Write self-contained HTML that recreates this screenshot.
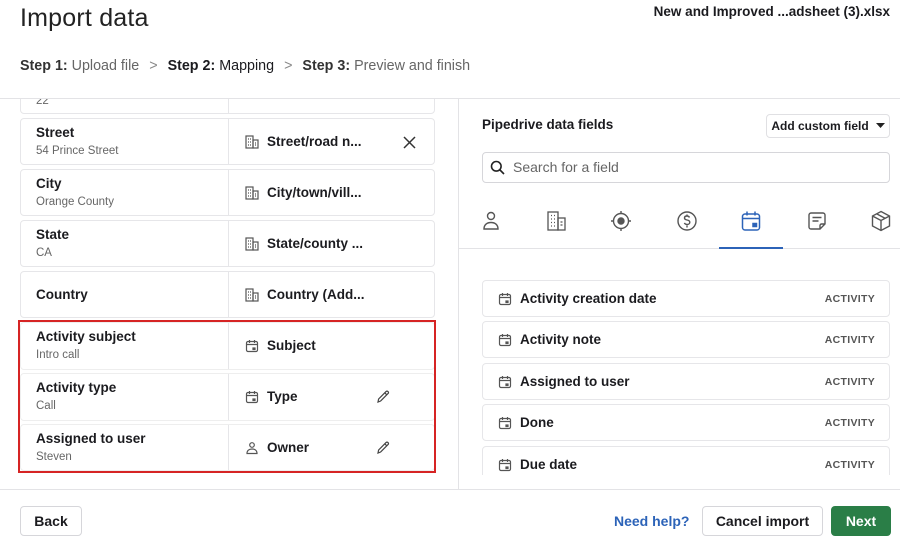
<!DOCTYPE html>
<html><head><meta charset="utf-8">
<style>
*{box-sizing:border-box;margin:0;padding:0}
body{width:900px;height:545px;overflow:hidden;background:#fff;font-family:"Liberation Sans",sans-serif;color:#1b1b1f;position:relative}
.abs{position:absolute}
h1{position:absolute;left:20px;top:4px;font-size:25px;font-weight:400;color:#222;letter-spacing:0.2px}
.file{position:absolute;right:10px;top:4px;font-size:13.5px;font-weight:700}
.steps{position:absolute;left:20px;top:58px;font-size:14.3px;color:#666}
.steps b{color:#333}
.steps .sep{color:#888;margin:0 10px}
.hline{position:absolute;left:0;width:900px;height:1px;background:#e3e3e6}
.vline{position:absolute;left:458px;top:99px;width:1px;height:391px;background:#e3e3e6}
.row{position:absolute;left:20px;width:415px;border:1px solid #e6e6e9;border-radius:4px;background:#fff}
.row .l{position:absolute;left:0;top:0;bottom:0;width:208px;border-right:1px solid #e6e6e9}
.row .t{position:absolute;left:15px;font-size:13.5px;font-weight:700}
.row .s{position:absolute;left:15px;font-size:11.5px;color:#666}
.row .r{position:absolute;left:224px;font-size:13.5px;font-weight:700;display:flex;align-items:center}
.row .r svg{margin-right:8px}
.red{position:absolute;left:18px;top:320px;width:418px;height:153px;border:2px solid #d62424}
.btn{position:absolute;border:1px solid #d6d6da;border-radius:4px;font-size:14px;font-weight:700;display:flex;align-items:center;justify-content:center;background:#fff}
.card{position:absolute;left:482px;width:408px;height:37px;border:1px solid #e6e6e9;border-radius:4px;display:flex;align-items:center;padding-left:15px;font-size:13.5px;font-weight:700}
.card svg{margin-right:8px}
.card .tag{position:absolute;right:14px;font-size:10.5px;color:#555;letter-spacing:0.3px}
.ico{position:absolute;top:210px}
</style></head><body>
<div class="row" style="top:84px;height:30px"><div class="l"></div><div class="s" style="top:10px">22</div></div>
<div class="abs" style="left:0;top:0;width:900px;height:99px;background:#fff"></div>
<h1>Import data</h1>
<div class="file">New and Improved ...adsheet (3).xlsx</div>
<div class="steps"><b>Step 1:</b> Upload file<span class="sep">&gt;</span><b style="color:#1b1b1f">Step 2:</b> <span style="color:#1b1b1f">Mapping</span><span class="sep">&gt;</span><b>Step 3:</b> Preview and finish</div>
<div class="hline" style="top:98px"></div>
<div class="vline"></div>

<div class="row" style="top:118px;height:47px"><div class="l"></div><div class="t" style="top:6px">Street</div><div class="s" style="top:26px">54 Prince Street</div>
<div class="r" style="top:15px"><svg width="14" height="14" viewBox="0 0 14 14" fill="none" stroke="#555" stroke-width="1.2"><rect x="1" y="1" width="7" height="12"/><rect x="8" y="5" width="5" height="8"/><path d="M3 4h1M5 4h1M3 7h1M5 7h1M3 10h1M5 10h1M10 8h1M10 10h1"/></svg>Street/road n...</div>
<svg class="abs" style="left:382px;top:17px" width="13" height="13" viewBox="0 0 13 13" stroke="#333" stroke-width="1.5"><path d="M1 1L12 12M12 1L1 12"/></svg></div>

<div class="row" style="top:169px;height:47px"><div class="l"></div><div class="t" style="top:6px">City</div><div class="s" style="top:26px">Orange County</div>
<div class="r" style="top:15px"><svg width="14" height="14" viewBox="0 0 14 14" fill="none" stroke="#555" stroke-width="1.2"><rect x="1" y="1" width="7" height="12"/><rect x="8" y="5" width="5" height="8"/><path d="M3 4h1M5 4h1M3 7h1M5 7h1M3 10h1M5 10h1M10 8h1M10 10h1"/></svg>City/town/vill...</div></div>

<div class="row" style="top:220px;height:47px"><div class="l"></div><div class="t" style="top:6px">State</div><div class="s" style="top:26px">CA</div>
<div class="r" style="top:15px"><svg width="14" height="14" viewBox="0 0 14 14" fill="none" stroke="#555" stroke-width="1.2"><rect x="1" y="1" width="7" height="12"/><rect x="8" y="5" width="5" height="8"/><path d="M3 4h1M5 4h1M3 7h1M5 7h1M3 10h1M5 10h1M10 8h1M10 10h1"/></svg>State/county ...</div></div>

<div class="row" style="top:271px;height:47px"><div class="l"></div><div class="t" style="top:15px">Country</div>
<div class="r" style="top:15px"><svg width="14" height="14" viewBox="0 0 14 14" fill="none" stroke="#555" stroke-width="1.2"><rect x="1" y="1" width="7" height="12"/><rect x="8" y="5" width="5" height="8"/><path d="M3 4h1M5 4h1M3 7h1M5 7h1M3 10h1M5 10h1M10 8h1M10 10h1"/></svg>Country (Add...</div></div>

<div class="row" style="top:322px;height:48px;border-color:#eee"><div class="l"></div><div class="t" style="top:6px">Activity subject</div><div class="s" style="top:26px">Intro call</div>
<div class="r" style="top:15px"><svg width="14" height="14" viewBox="0 0 14 14" fill="none" stroke="#555" stroke-width="1.2"><rect x="1.5" y="2.5" width="11" height="10" rx="1.5"/><path d="M4.5 1v3M9.5 1v3M1.5 5.5h11"/><rect x="8" y="9" width="2" height="1.5" fill="#555"/></svg>Subject</div></div>

<div class="row" style="top:373px;height:48px;border-color:#eee"><div class="l"></div><div class="t" style="top:6px">Activity type</div><div class="s" style="top:26px">Call</div>
<div class="r" style="top:15px"><svg width="14" height="14" viewBox="0 0 14 14" fill="none" stroke="#555" stroke-width="1.2"><rect x="1.5" y="2.5" width="11" height="10" rx="1.5"/><path d="M4.5 1v3M9.5 1v3M1.5 5.5h11"/><rect x="8" y="9" width="2" height="1.5" fill="#555"/></svg>Type</div>
<svg class="abs" style="left:355px;top:16px" width="14" height="14" viewBox="0 0 14 14" fill="none" stroke="#444" stroke-width="1.2"><path d="M2 12l.6-3L10 1.6a1.4 1.4 0 012 2L4.6 11z M8.8 2.8l2 2"/></svg></div>

<div class="row" style="top:424px;height:47px;border-color:#eee"><div class="l"></div><div class="t" style="top:6px">Assigned to user</div><div class="s" style="top:26px">Steven</div>
<div class="r" style="top:15px"><svg width="14" height="14" viewBox="0 0 14 14" fill="none" stroke="#555" stroke-width="1.2"><circle cx="7" cy="4" r="2.3"/><path d="M2 12.5c0-3 2.2-4.5 5-4.5s5 1.5 5 4.5z"/></svg>Owner</div>
<svg class="abs" style="left:355px;top:16px" width="14" height="14" viewBox="0 0 14 14" fill="none" stroke="#444" stroke-width="1.2"><path d="M2 12l.6-3L10 1.6a1.4 1.4 0 012 2L4.6 11z M8.8 2.8l2 2"/></svg></div>

<div class="red"></div>

<div class="abs" style="left:482px;top:117px;font-size:13.5px;font-weight:700">Pipedrive data fields</div>
<div class="btn" style="left:766px;top:114px;width:124px;height:24px;font-size:12px;border-color:#e0e0e3">Add custom field <svg style="margin-left:7px" width="9" height="6" viewBox="0 0 9 6"><path d="M0 0h9L4.5 5z" fill="#222"/></svg></div>
<div class="abs" style="left:482px;top:152px;width:408px;height:31px;border:1px solid #d6d6da;border-radius:4px"></div>
<svg class="abs" style="left:490px;top:160px" width="15" height="15" viewBox="0 0 15 15" fill="none" stroke="#222" stroke-width="1.6"><circle cx="6.3" cy="6.3" r="4.8"/><path d="M10 10l4 4"/></svg>
<div class="abs" style="left:513px;top:159px;font-size:14px;color:#666">Search for a field</div>

<svg class="ico" style="left:482px" width="18" height="22" viewBox="0 0 18 22" fill="none" stroke="#555" stroke-width="1.4"><circle cx="9" cy="6" r="3.5"/><path d="M2 19c0-4.5 3.2-6.5 7-6.5s7 2 7 6.5z"/></svg>
<svg class="ico" style="left:547px" width="20" height="22" viewBox="0 0 20 22" fill="none" stroke="#555" stroke-width="1.3"><rect x="1" y="2" width="10" height="18"/><rect x="11" y="8" width="7" height="12"/><path d="M4 5.5h1M7 5.5h1M4 9h1M7 9h1M4 12.5h1M7 12.5h1M4 16h1M7 16h1M13.5 12h2M13.5 15h2"/></svg>
<svg class="ico" style="left:610px" width="22" height="22" viewBox="0 0 22 22" fill="none" stroke="#555" stroke-width="1.4"><circle cx="11" cy="11" r="7.5"/><circle cx="11" cy="11" r="3" fill="#555"/><path d="M11 1v2.5M11 18.5V21M1 11h2.5M18.5 11H21"/></svg>
<svg class="ico" style="left:676px" width="22" height="22" viewBox="0 0 22 22" fill="none" stroke="#555" stroke-width="1.4"><circle cx="11" cy="11" r="9"/><path d="M13.5 7.5c-.5-1-1.4-1.5-2.5-1.5-1.5 0-2.5.8-2.5 2s1 1.7 2.5 2 2.8.8 2.8 2.2-1.2 2.3-2.8 2.3c-1.200 0-2.2-.6-2.6-1.6M11 4.5v2M11 15.5v2"/></svg>
<svg class="ico" style="left:741px" width="20" height="22" viewBox="0 0 20 22" fill="none" stroke="#2c63b8" stroke-width="1.5"><rect x="1.5" y="4" width="17" height="16" rx="2.5"/><path d="M6 1.5v4M14 1.5v4M1.5 8.5h17"/><rect x="12" y="13.5" width="3.5" height="3" fill="#2c63b8"/></svg>
<svg class="ico" style="left:807px" width="20" height="22" viewBox="0 0 20 22" fill="none" stroke="#555" stroke-width="1.4"><path d="M13 19H4a2 2 0 01-2-2V5a2 2 0 012-2h12a2 2 0 012 2v9z M13 19v-3.5a1.5 1.5 0 011.5-1.5H18M5.5 7.5h9M5.5 11h6"/></svg>
<svg class="ico" style="left:870px" width="22" height="22" viewBox="0 0 22 22" fill="none" stroke="#555" stroke-width="1.4"><path d="M11 1.5l8.5 4.5v10L11 20.5 2.5 16V6z M2.5 6L11 10.5 19.5 6M11 10.5v10M6.5 3.7l8.5 4.5"/></svg>
<div class="hline" style="top:248px;left:459px;width:441px"></div>
<div class="abs" style="left:719px;top:247px;width:64px;height:2px;background:#2c63b8"></div>

<div class="abs" style="left:459px;top:270px;width:441px;height:205px;overflow:hidden">
<div class="card" style="top:10px;left:23px">CAL Activity creation date<span class="tag">ACTIVITY</span></div>
<div class="card" style="top:51px;left:23px">CAL Activity note<span class="tag">ACTIVITY</span></div>
<div class="card" style="top:93px;left:23px">CAL Assigned to user<span class="tag">ACTIVITY</span></div>
<div class="card" style="top:134px;left:23px">CAL Done<span class="tag">ACTIVITY</span></div>
<div class="card" style="top:176px;left:23px">CAL Due date<span class="tag">ACTIVITY</span></div>
</div>

<div class="hline" style="top:489px"></div>
<div class="btn" style="left:20px;top:506px;width:62px;height:30px">Back</div>
<div class="abs" style="left:614px;top:513px;font-size:14px;font-weight:700;color:#2c63b8">Need help?</div>
<div class="btn" style="left:702px;top:506px;width:121px;height:30px">Cancel import</div>
<div class="btn" style="left:831px;top:506px;width:60px;height:30px;background:#2a7e47;border-color:#2a7e47;color:#fff">Next</div>

<script>
var cal='<svg width="14" height="14" viewBox="0 0 14 14" fill="none" stroke="#555" stroke-width="1.2"><rect x="1.5" y="2.5" width="11" height="10" rx="1.5"/><path d="M4.5 1v3M9.5 1v3M1.5 5.5h11"/><rect x="8" y="9" width="2" height="1.5" fill="#555"/></svg>';
document.querySelectorAll('.card').forEach(function(c){c.innerHTML=c.innerHTML.replace('CAL ',cal);});
</script>
</body></html>
